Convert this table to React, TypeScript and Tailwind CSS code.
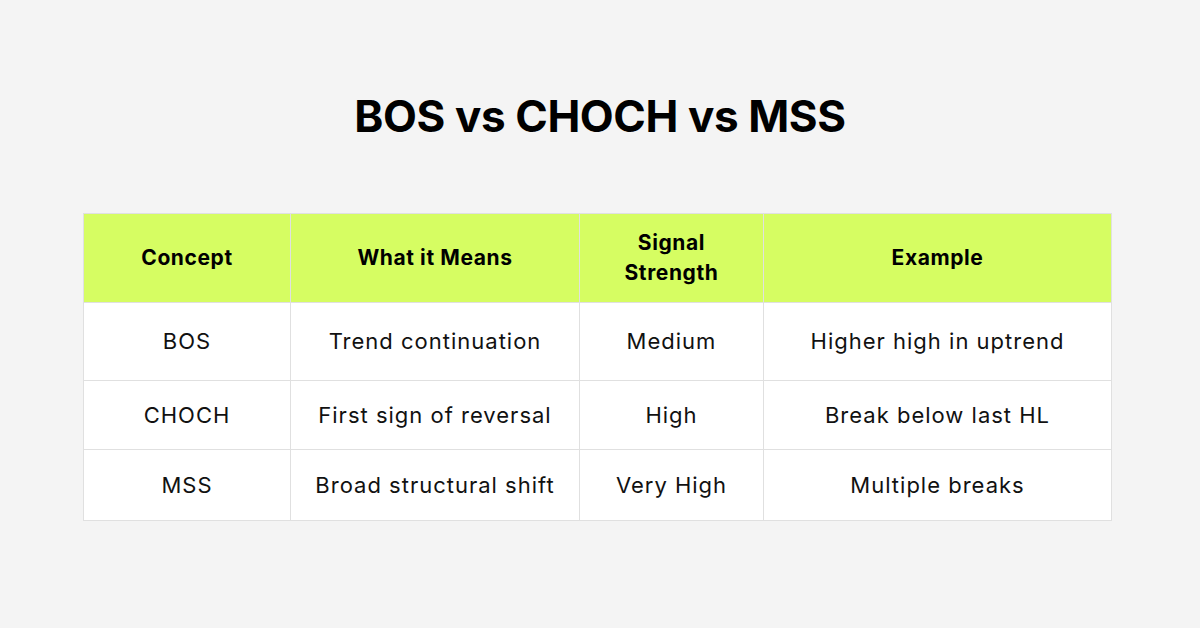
import React from 'react'

const rows = [
  { concept: 'BOS', meaning: 'Trend continuation', strength: 'Medium', example: 'Higher high in uptrend', h: 'h-[78px]' },
  { concept: 'CHOCH', meaning: 'First sign of reversal', strength: 'High', example: 'Break below last HL', h: 'h-[69px]' },
  { concept: 'MSS', meaning: 'Broad structural shift', strength: 'Very High', example: 'Multiple breaks', h: 'h-[71px]' },
];

export default function App() {
  return (
    <div className="w-[1200px] h-[628px] bg-[#f4f4f4] flex flex-col font-['Inter',sans-serif] text-black">
      <h1 className="mt-[88px] h-[56px] flex items-center justify-center text-[44px] font-bold tracking-[-0.4px]">
        BOS vs CHOCH vs MSS
      </h1>

      <table className="mt-[69px] ml-[83px] w-[1028px] border-collapse table-fixed">
        <colgroup>
          <col className="w-[207px]" />
          <col className="w-[289px]" />
          <col className="w-[184px]" />
          <col className="w-[348px]" />
        </colgroup>
        <thead>
          <tr className="h-[89px] bg-[#d6fd62] text-[21px] font-bold tracking-[0.6px]">
            <th className="border border-[#e0e0e0]">Concept</th>
            <th className="border border-[#e0e0e0]">What it Means</th>
            <th className="border border-[#e0e0e0] leading-[30px]">
              Signal<br />Strength
            </th>
            <th className="border border-[#e0e0e0]">Example</th>
          </tr>
        </thead>
        <tbody>
          {rows.map(row => (
            <tr key={row.concept} className={`${row.h} bg-white text-[22px] tracking-[1px] text-[#111]`}>
              <td className="border border-[#e0e0e0] text-center">{row.concept}</td>
              <td className="border border-[#e0e0e0] text-center">{row.meaning}</td>
              <td className="border border-[#e0e0e0] text-center">{row.strength}</td>
              <td className="border border-[#e0e0e0] text-center">{row.example}</td>
            </tr>
          ))}
        </tbody>
      </table>
    </div>
  )
}
